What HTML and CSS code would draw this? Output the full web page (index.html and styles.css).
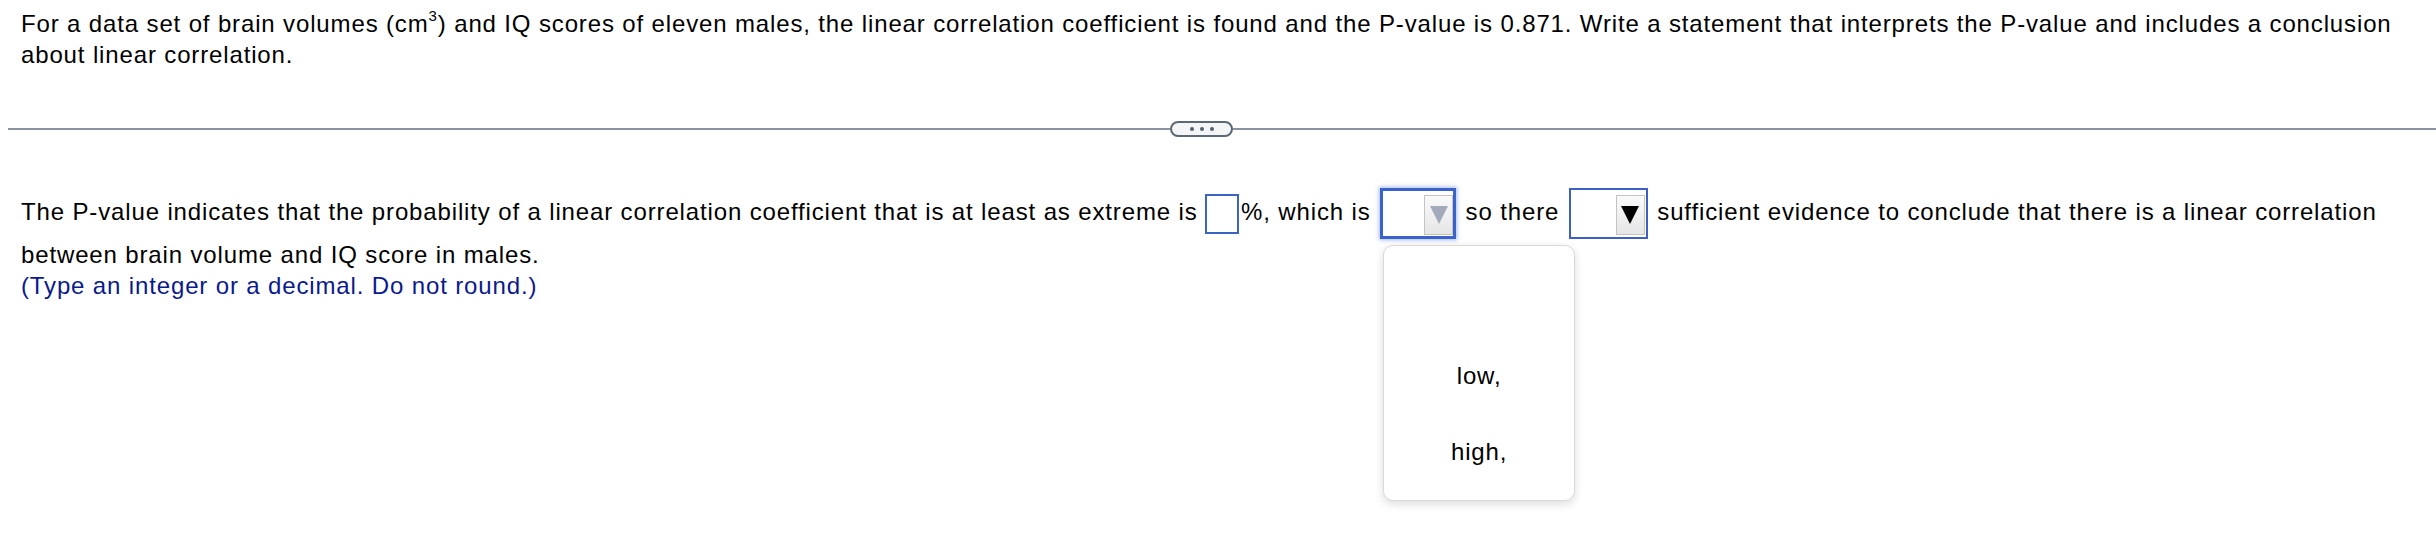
FILE: index.html
```html
<!DOCTYPE html>
<html>
<head>
  <title>Brain volume and IQ - P-value</title>
  <meta charset="utf-8">
  <link rel="stylesheet" href="styles.css">
</head>
<body>
  <div class="question">
    For a data set of brain volumes (cm<sup>3</sup>) and IQ scores of eleven males, the linear correlation coefficient is found and the P-value is 0.871. Write a statement that interprets the P-value and includes a conclusion about linear correlation.
  </div>

  <div class="divider">
    <div class="divider-line left"></div>
    <div class="divider-pill"><span></span><span></span><span></span></div>
    <div class="divider-line"></div>
  </div>

  <div class="answer">
    <p class="answer-text">
      The P-value indicates that the probability of a linear correlation coefficient that is at least as extreme is
      <span class="num-box"></span>%, which is
      <span class="select focused">
        <span class="select-btn"><span class="tri grey"></span></span>
        <span class="select-menu">
          <span class="option"></span>
          <span class="option">low,</span>
          <span class="option">high,</span>
        </span>
      </span>
      so there
      <span class="select">
        <span class="select-btn"><span class="tri"></span></span>
      </span>
      sufficient evidence to conclude that there is a linear correlation between brain volume and IQ score in males.
    </p>
    <p class="hint">(Type an integer or a decimal. Do not round.)</p>
  </div>
</body>
</html>
```

FILE: styles.css
```css
html {
  height: 100%;
}
body {
  margin: 0;
  min-height: 100%;
  font-family: "Liberation Sans", Arial, sans-serif;
  font-size: 24px;
  line-height: 31px;
  letter-spacing: 0.86px;
  color: #000;
  background: #fff;
}
.question {
  padding: 8px 21px 0 21px;
}
sup {
  font-size: 15px;
  line-height: 0;
  vertical-align: 11px;
}
.divider {
  display: flex;
  align-items: center;
  margin-top: 51px;
  height: 16px;
}
.divider-line {
  flex: 1;
  height: 2px;
  background-color: #8a93a0;
}
.divider-line.left {
  flex: none;
  width: 1162px;
  margin-left: 8px;
}
.divider-pill {
  width: 59px;
  height: 12px;
  border: 2px solid #5d6876;
  border-radius: 8px;
  background-color: #f4f5f7;
  display: flex;
  align-items: center;
  justify-content: center;
  gap: 6px;
}
.divider-pill span {
  width: 4px;
  height: 4px;
  border-radius: 50%;
  background-color: #55606e;
}
.answer {
  padding: 0 21px;
  margin-top: 51px;
}
.answer p {
  margin: 0;
}
.num-box {
  display: inline-block;
  vertical-align: middle;
  width: 30px;
  height: 36px;
  border: 2px solid #3b63c6;
  margin: 0 2px 0 0;
}
.select {
  position: relative;
  z-index: 1;
  display: inline-flex;
  align-items: center;
  justify-content: flex-end;
  vertical-align: middle;
  box-sizing: border-box;
  width: 79px;
  height: 51px;
  border: 2px solid #3b5fc6;
  padding: 2px 1px 0 0;
  margin: 0 2px;
}
.select.focused {
  border: 3px solid #3a62cc;
  width: 76px;
  padding-right: 0;
  box-shadow: 0 0 4px 1px rgba(58, 98, 204, 0.45);
}
.select-btn {
  display: flex;
  align-items: center;
  justify-content: center;
  box-sizing: border-box;
  width: 29px;
  height: 40px;
  border: 1.5px solid #c4c4c4;
  background: linear-gradient(#fafafa, #e6e6e6);
}
.tri {
  width: 0;
  height: 0;
  border-left: 9px solid transparent;
  border-right: 9px solid transparent;
  border-top: 18px solid #000;
}
.tri.grey {
  border-top-color: #a3aabb;
}
.select-menu {
  position: absolute;
  left: 0;
  top: 54px;
  width: 192px;
  box-sizing: border-box;
  padding: 16px 0 10px;
  background: #fff;
  border: 1px solid #d9d9d9;
  border-radius: 10px;
  box-shadow: 0 3px 10px rgba(0, 0, 0, 0.14);
  display: flex;
  flex-direction: column;
}
.option {
  height: 76px;
  line-height: 76px;
  text-align: center;
  color: #000;
}
.hint {
  color: #0b1a8c;
}
```
